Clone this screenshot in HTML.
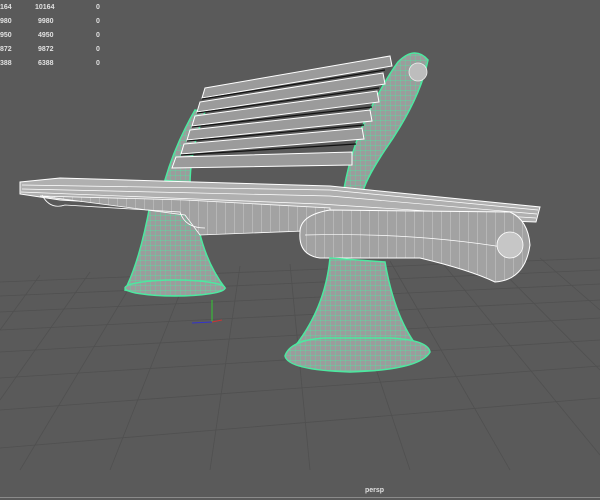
<!DOCTYPE html>
<html><head><style>
html,body{margin:0;padding:0;background:#5a5a5a;width:600px;height:500px;overflow:hidden}
svg{position:absolute;left:0;top:0}
.t{font-family:"Liberation Sans",sans-serif;font-size:7px;font-weight:bold;fill:#e0e0e0}
</style></head><body>
<svg width="600" height="500" viewBox="0 0 600 500">
<defs>
<pattern id="gm" width="5" height="5" patternUnits="userSpaceOnUse">
<rect width="5" height="5" fill="#9c9c9c"/>
<path d="M0 0 H5 M0 0 V5" stroke="#4de8a0" stroke-width="0.7"/>
</pattern>
<pattern id="wm" width="9" height="9" patternUnits="userSpaceOnUse">
<rect width="9" height="9" fill="#a2a2a2"/>
<path d="M0 0 V9" stroke="#e8e8e8" stroke-width="0.6"/>
</pattern>
</defs>
<rect width="600" height="500" fill="#5a5a5a"/>
<!-- grid -->
<g stroke="#505050" stroke-width="0.8" fill="none">
<path d="M0 282 L600 258"/><path d="M0 296 L600 270"/><path d="M0 312 L600 284"/><path d="M0 330 L600 300"/><path d="M0 352 L600 318"/><path d="M0 378 L600 340"/><path d="M0 410 L600 366"/><path d="M0 448 L600 398"/>
<path d="M40 275 L0 330"/><path d="M90 272 L0 400"/><path d="M140 270 L20 470"/><path d="M190 268 L110 470"/><path d="M240 266 L210 470"/><path d="M290 264 L310 470"/><path d="M340 262 L410 470"/><path d="M390 261 L510 470"/><path d="M440 260 L600 455"/><path d="M490 259 L600 370"/><path d="M540 258 L600 310"/>
</g>
<!-- left pedestal -->
<path d="M150 205 Q140 260 125 290 Q175 302 225 288 Q200 255 195 205 Z" fill="url(#gm)" stroke="#4de8a0" stroke-width="1.5"/>
<ellipse cx="175" cy="288" rx="50" ry="8" fill="url(#gm)" stroke="#4de8a0" stroke-width="1.5"/>
<path d="M165 180 Q175 145 195 110 L205 112 Q190 150 190 185 Z" fill="url(#gm)" stroke="#4de8a0" stroke-width="1.5"/>
<!-- right back support -->
<path d="M398 62 Q415 45 428 60 Q420 100 385 150 Q365 180 362 195 L343 195 Q350 150 370 110 Q385 80 398 62 Z" fill="url(#gm)" stroke="#4de8a0" stroke-width="1.5"/>
<circle cx="418" cy="72" r="9" fill="#bdbdbd" stroke="#eee" stroke-width="0.8"/>
<!-- back slats -->
<g fill="#9b9b9b" stroke="#fff" stroke-width="1">
<path d="M205 88 L390 56 L392 66 L202 98 Z"/>
<path d="M200 102 L383 73 L385 84 L197 112 Z"/>
<path d="M195 116 L377 91 L379 102 L192 126 Z"/>
<path d="M190 130 L370 110 L372 121 L187 140 Z"/>
<path d="M184 144 L362 128 L364 139 L181 154 Z"/>
<path d="M176 157 L352 152 L352 165 L172 168 Z"/>
</g>
<g stroke="#111" stroke-width="1.2"><path d="M202 99 L385 70"/><path d="M197 113 L379 88"/><path d="M192 127 L372 107"/><path d="M187 141 L364 125"/><path d="M181 155 L356 144"/></g>
<!-- seat -->
<path d="M20 182 L60 178 L330 186 L540 207 L536 222 L300 214 L60 200 L20 194 Z" fill="#b0b0b0" stroke="#fff" stroke-width="1"/>
<g stroke="#fff" stroke-width="0.7" fill="none"><path d="M22 185 L330 190 L538 210"/><path d="M22 189 L330 196 L537 214"/><path d="M21 192 L320 204 L536 218"/></g>
<path d="M40 196 L185 215 L200 235 L330 230 L330 208 L185 200 Z" fill="url(#wm)" stroke="#fff" stroke-width="0.8"/>
<path d="M42 195 Q50 210 65 205 L180 212 Q185 228 205 228" fill="none" stroke="#fff" stroke-width="0.8"/>
<!-- right bracket -->
<path d="M300 232 Q300 215 330 210 L510 212 Q528 220 530 245 Q525 280 495 282 Q470 270 420 258 L320 258 Q298 255 300 232 Z" fill="url(#wm)" stroke="#fff" stroke-width="1"/>
<path d="M305 235 Q420 232 520 250" stroke="#fff" stroke-width="0.7" fill="none"/>
<circle cx="510" cy="245" r="13" fill="#c6c6c6" stroke="#fff" stroke-width="0.8"/>
<!-- right pedestal -->
<path d="M330 258 Q325 310 292 350 Q345 372 420 350 Q395 320 385 262 Z" fill="url(#gm)" stroke="#4de8a0" stroke-width="1.5"/>
<path d="M285 356 Q290 340 325 338 L390 338 Q428 340 430 352 Q420 370 350 372 Q288 370 285 356 Z" fill="url(#gm)" stroke="#4de8a0" stroke-width="1.5"/>
<!-- axis -->
<path d="M212 322 L212 300" stroke="#3c3" stroke-width="1"/>
<path d="M212 322 L222 320" stroke="#c33" stroke-width="1"/>
<path d="M212 322 L192 323" stroke="#33c" stroke-width="1"/>
<!-- hud -->
<text class="t" x="0" y="9">164</text><text class="t" x="35" y="9">10164</text><text class="t" x="96" y="9">0</text>
<text class="t" x="0" y="23">980</text><text class="t" x="38" y="23">9980</text><text class="t" x="96" y="23">0</text>
<text class="t" x="0" y="37">950</text><text class="t" x="38" y="37">4950</text><text class="t" x="96" y="37">0</text>
<text class="t" x="0" y="51">872</text><text class="t" x="38" y="51">9872</text><text class="t" x="96" y="51">0</text>
<text class="t" x="0" y="65">388</text><text class="t" x="38" y="65">6388</text><text class="t" x="96" y="65">0</text>
<text class="t" x="365" y="492">persp</text>
<rect x="0" y="497" width="600" height="1" fill="#8a8a8a"/>
</svg>
</body></html>
